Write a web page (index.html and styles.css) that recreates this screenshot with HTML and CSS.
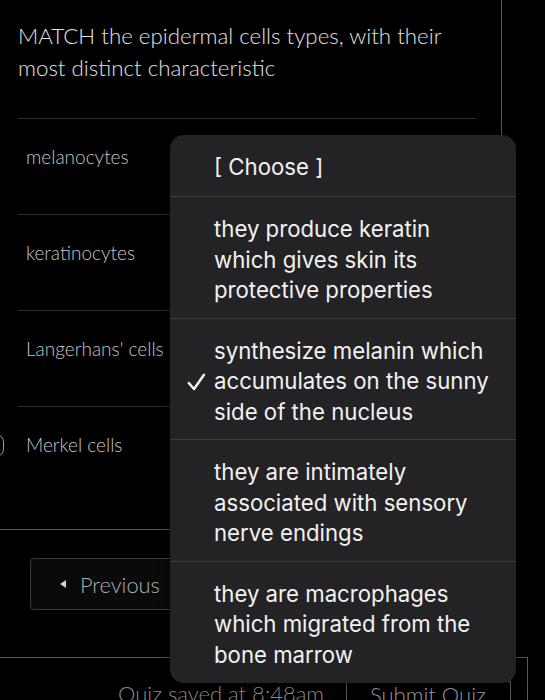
FILE: index.html
```html
<!DOCTYPE html>
<html>
<head>
<meta charset="utf-8">
<link rel="stylesheet" href="styles.css">
</head>
<body>
<div class="page">
  <div class="question-box">
    <div class="content">
      <p class="question-text">MATCH the epidermal cells types, with their most distinct characteristic</p>
      <div class="answers">
        <div class="row"><span class="label">melanocytes</span></div>
        <div class="row"><span class="label">keratinocytes</span></div>
        <div class="row"><span class="label">Langerhans' cells</span></div>
        <div class="row last"><span class="edge-icon"></span><span class="label">Merkel cells</span></div>
      </div>
    </div>
  </div>
  <div class="nav">
    <button class="prev-btn"><span class="tri"></span><span>Previous</span></button>
  </div>
  <div class="footer">
    <span class="saved">Quiz saved at 8:48am</span>
    <span class="submit">Submit Quiz</span>
  </div>

  <div class="dropdown">
    <div class="opt single">[ Choose ]</div>
    <div class="opt">they produce keratin<br>which gives skin its<br>protective properties</div>
    <div class="opt checked"><svg class="check" width="19" height="18" viewBox="0 0 19 18"><polyline points="1.8,10 7,16 17,1.8" fill="none" stroke="#f2f2f2" stroke-width="2.5" stroke-linecap="round" stroke-linejoin="round"/></svg>synthesize melanin which<br>accumulates on the sunny<br>side of the nucleus</div>
    <div class="opt">they are intimately<br>associated with sensory<br>nerve endings</div>
    <div class="opt">they are macrophages<br>which migrated from the<br>bone marrow</div>
  </div>
</div>
</body>
</html>
```
FILE: styles.css
```css
html, body {
  margin: 0;
  padding: 0;
  background: #000;
}
body {
  width: 545px;
  height: 700px;
  overflow: hidden;
  font-family: Lato, "Liberation Sans", sans-serif;
}
.page {
  position: relative;
  width: 545px;
  height: 700px;
}
.question-box {
  margin-left: -20px;
  width: 522px;
  height: 530px;
  box-sizing: border-box;
  border-right: 1px solid #5a5a5a;
  border-bottom: 1px solid #5a5a5a;
  padding-left: 38px;
}
.content {
  width: 458px;
  padding-top: 20px;
}
.question-text {
  margin: 0;
  font-weight: 300;
  font-size: 22.3px;
  line-height: 32px;
  color: #e2e2e2;
}
.answers {
  margin-top: 34px;
  border-top: 1px solid #2e2e2e;
}
.row {
  position: relative;
  height: 96px;
  box-sizing: border-box;
  border-bottom: 1px solid #2e2e2e;
  padding-top: 26px;
  padding-left: 8px;
}
.row.last {
  border-bottom: none;
}
.label {
  font-weight: 300;
  font-size: 19px;
  line-height: 24px;
  color: #c4c4c4;
}
.edge-icon {
  position: absolute;
  left: -34px;
  top: 27px;
  width: 20px;
  height: 23px;
  border: 1.5px solid #9a9a9a;
  border-radius: 8px;
  box-sizing: border-box;
}
.nav {
  padding-top: 28px;
  padding-left: 30px;
}
.prev-btn {
  display: flex;
  align-items: center;
  gap: 14px;
  width: 170px;
  height: 52px;
  box-sizing: border-box;
  padding: 0 0 0 29px;
  background: #0a0a0a;
  border: 1px solid #3c3c3c;
  border-radius: 4px;
  font-family: Lato, "Liberation Sans", sans-serif;
  font-weight: 300;
  font-size: 21.8px;
  color: #b0b0b0;
}
.tri {
  width: 0;
  height: 0;
  border-top: 4.5px solid transparent;
  border-bottom: 4.5px solid transparent;
  border-right: 6px solid #d0d0d0;
}
.footer {
  margin-top: 47px;
  margin-left: -20px;
  width: 548px;
  height: 60px;
  box-sizing: border-box;
  border-top: 1px solid #5a5a5a;
  border-right: 1px solid #5a5a5a;
  display: flex;
  align-items: flex-start;
  padding-left: 138px;
  padding-top: 24px;
}
.saved {
  font-weight: 300;
  font-size: 22px;
  line-height: 24px;
  color: #8a8a8a;
  width: 228px;
}
.submit {
  margin-top: -1px;
  width: 165px;
  height: 40px;
  box-sizing: border-box;
  border: 1px solid #5a5a5a;
  padding-left: 23px;
  padding-top: 1px;
  font-weight: 300;
  font-size: 22px;
  line-height: 24px;
  color: #9a9a9a;
  white-space: nowrap;
  overflow: hidden;
}
.dropdown {
  position: absolute;
  left: 170px;
  top: 135px;
  width: 346px;
  height: 548px;
  background: #232325;
  border-radius: 14px;
  overflow: hidden;
  font-family: Inter, "Noto Sans", sans-serif;
  font-size: 22.2px;
  line-height: 30.5px;
  color: #f2f2f2;
  box-shadow: 0 0 12px rgba(0,0,0,0.5);
}
.opt {
  position: relative;
  padding: 17px 0 13px 44px;
  height: 121.5px;
  box-sizing: border-box;
  border-bottom: 1px solid #3d3d3f;
}
.opt.single {
  height: 62px;
}
.opt:last-child {
  border-bottom: none;
}
.check {
  position: absolute;
  left: 17px;
  top: 54px;
}
```
